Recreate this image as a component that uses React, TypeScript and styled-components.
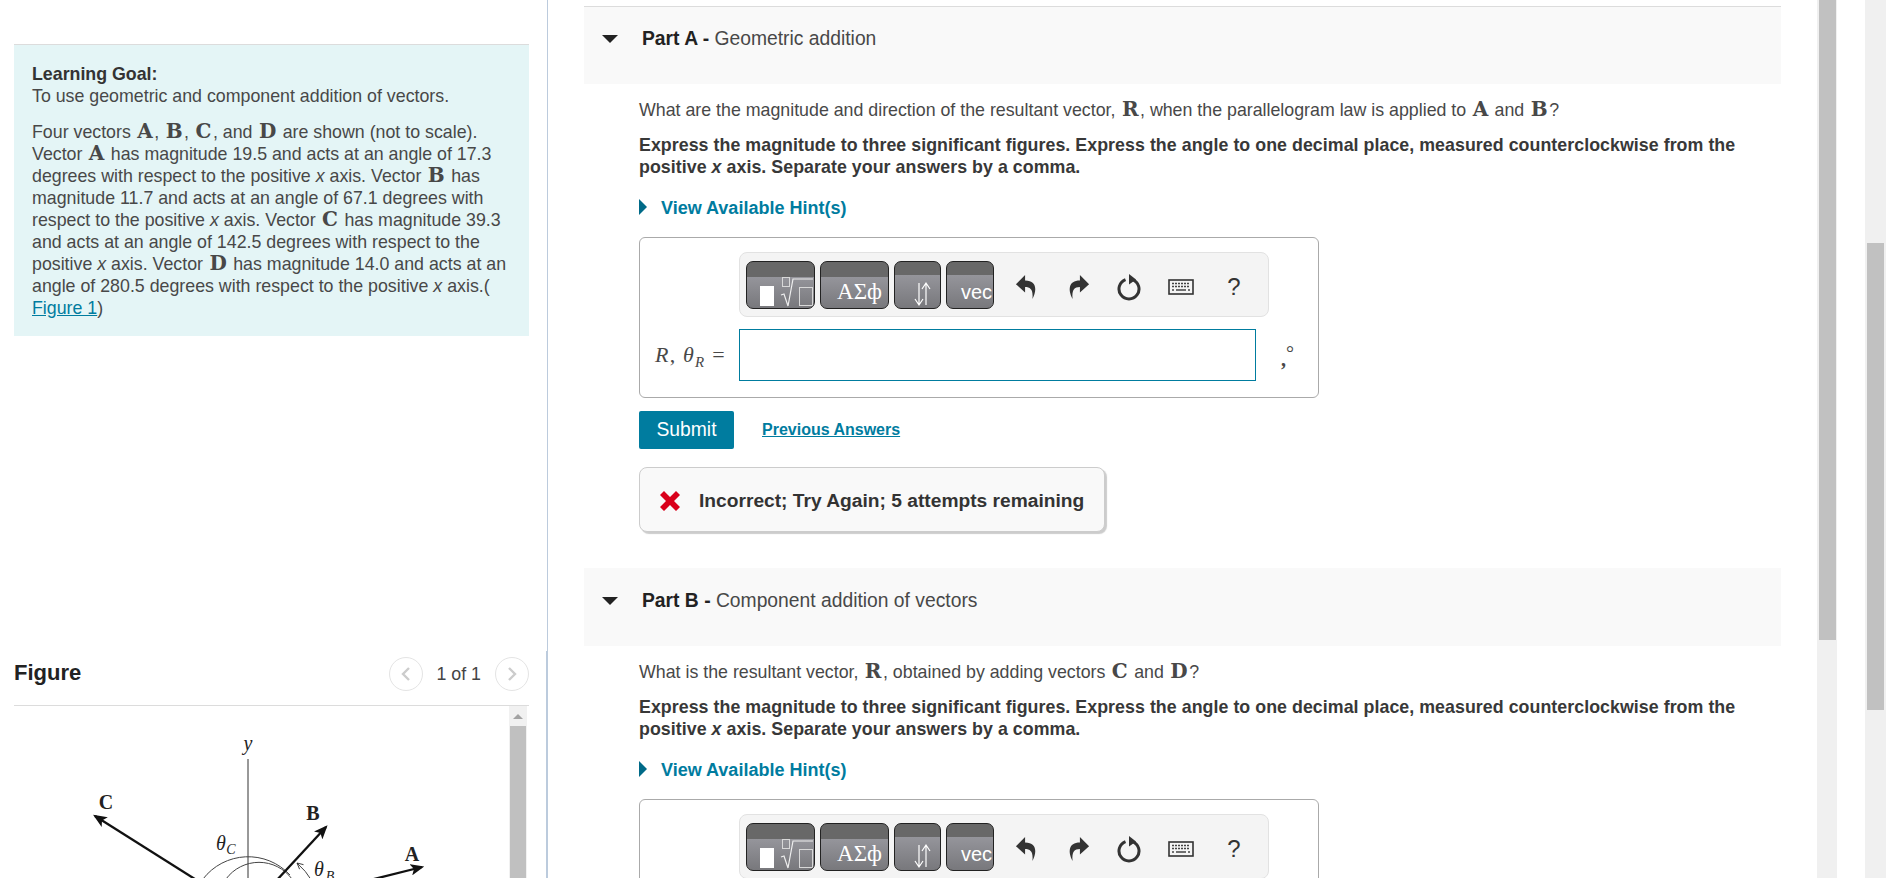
import styled, { createGlobalStyle } from 'styled-components';

const GlobalStyle = createGlobalStyle`
  html, body {
    margin: 0;
    padding: 0;
    background: #fff;
    overflow: hidden;
  }
  body {
    font-family: "Liberation Sans", Arial, sans-serif;
    font-size: 17.8px;
    line-height: 22px;
    color: #484848;
  }
`;

const V = styled.b`
  font-family: "DejaVu Serif", "Liberation Serif", serif;
  font-size: 20px;
  line-height: 0;
  font-weight: 700;
  color: #484848;
  margin: 0 1.5px;
`;

const Toolbar = () => (
  <ToolRow>
    <MathButton $width={69}>
      <svg width="67" height="46" viewBox="0 0 67 46">
        <rect x="13" y="24" width="14" height="20" fill="#fff" />
        <rect x="35.5" y="15.5" width="7" height="9" fill="none" stroke="#d8d8d8" />
        <path d="M34 33l3-1 4 12 5-27h20" fill="none" stroke="#eee" strokeWidth="1.2" />
        <rect x="52.5" y="25.5" width="13" height="18" fill="none" stroke="#d8d8d8" />
      </svg>
    </MathButton>
    <MathButton $width={69}>
      <ButtonText $serif>ΑΣф</ButtonText>
    </MathButton>
    <MathButton $width={47} $band={13}>
      <svg width="45" height="46" viewBox="0 0 45 46">
        <path d="M24 21v22M20 37l4 6 4-6M31 43V21M27 27l4-6 4 6" fill="none" stroke="#fff" strokeWidth="1.2" />
      </svg>
    </MathButton>
    <MathButton $width={48} $band={13}>
      <ButtonText>vec</ButtonText>
    </MathButton>
    <ActionIcons>
      <ActionIcon>
        <svg width="22" height="26" viewBox="0 0 24 28">
          <path d="M11 1L1 11l10 9v-6c6 0 9 3 8 13 5-9 5-20-8-20z" fill="#333" />
        </svg>
      </ActionIcon>
      <ActionIcon>
        <svg width="22" height="26" viewBox="0 0 24 28">
          <path d="M13 1l10 10-10 9v-6c-6 0-9 3-8 13C0 18 0 7 13 7z" fill="#333" />
        </svg>
      </ActionIcon>
      <ActionIcon>
        <svg width="24" height="28" viewBox="0 0 24 28">
          <path d="M15.5 6.6a10 10 0 1 1-7 0" fill="none" stroke="#333" strokeWidth="3" />
          <path d="M12 1l7 5.5-7 5z" fill="#333" />
        </svg>
      </ActionIcon>
      <ActionIcon>
        <svg width="26" height="16" viewBox="0 0 26 16">
          <rect x="1" y="1" width="24" height="14" fill="#f4f4f4" stroke="#333" strokeWidth="1.6" />
          <path d="M4 4.5h18M4 7.5h18" stroke="#444" strokeWidth="1.6" strokeDasharray="2 1" />
          <path d="M4 11h2M8 11h10M20 11h2" stroke="#444" strokeWidth="1.6" />
        </svg>
      </ActionIcon>
      <HelpMark>?</HelpMark>
    </ActionIcons>
  </ToolRow>
);

const App = () => {
  return (
    <Page>
      <GlobalStyle />
      <LeftPane>
        <GoalSection>
          <GoalBox>
            <strong>Learning Goal:</strong>
            <br />
            To use geometric and component addition of vectors.
            <GoalParagraph>
              Four vectors <V>A</V>, <V>B</V>, <V>C</V>, and <V>D</V> are shown (not to scale).
              Vector <V>A</V> has magnitude 19.5 and acts at an angle of 17.3 degrees with respect
              to the positive <i>x</i> axis. Vector <V>B</V> has magnitude 11.7 and acts at an angle
              of 67.1 degrees with respect to the positive <i>x</i> axis. Vector <V>C</V> has
              magnitude 39.3 and acts at an angle of 142.5 degrees with respect to the
              positive <i>x</i> axis. Vector <V>D</V> has magnitude 14.0 and acts at an angle of
              280.5 degrees with respect to the positive <i>x</i> axis.(
              <br />
              <FigureLink>Figure 1</FigureLink>)
            </GoalParagraph>
          </GoalBox>
        </GoalSection>
        <FigureSection>
          <FigureHeader>
            <FigureTitle>Figure</FigureTitle>
            <Pager>
              <PagerButton>
                <svg width="10" height="16" viewBox="0 0 10 16">
                  <path d="M8 2L2 8l6 6" fill="none" stroke="#ccc" strokeWidth="2.4" />
                </svg>
              </PagerButton>
              <PagerText>1 of 1</PagerText>
              <PagerButton>
                <svg width="10" height="16" viewBox="0 0 10 16">
                  <path d="M2 2l6 6-6 6" fill="none" stroke="#ccc" strokeWidth="2.4" />
                </svg>
              </PagerButton>
            </Pager>
          </FigureHeader>
          <FigureBody>
            <svg width="495" height="173" viewBox="14 705 495 173">
              <defs>
                <marker id="head" markerWidth="6" markerHeight="5" refX="5" refY="2.5" orient="auto">
                  <path d="M0 0L6 2.5 0 5 1.4 2.5z" fill="#111" />
                </marker>
                <marker id="thin" markerWidth="8" markerHeight="8" refX="7" refY="4" orient="auto">
                  <path d="M1 1L7 4 1 7" fill="none" stroke="#222" strokeWidth="0.8" />
                </marker>
              </defs>
              <line x1="248" y1="758" x2="248" y2="880" stroke="#333" strokeWidth="1" />
              <path d="M203 878A57 57 0 0 1 290 874" fill="none" stroke="#444" strokeWidth="1" />
              <path d="M226 878A41 41 0 0 1 292 878" fill="none" stroke="#444" strokeWidth="1" />
              <path d="M312 880A72 72 0 0 0 297 862" fill="none" stroke="#444" strokeWidth="1" markerEnd="url(#thin)" />
              <line x1="198" y1="880" x2="95" y2="815" stroke="#111" strokeWidth="2.3" markerEnd="url(#head)" />
              <line x1="276" y1="880" x2="326" y2="826" stroke="#111" strokeWidth="2.3" markerEnd="url(#head)" />
              <line x1="366" y1="880" x2="422" y2="866" stroke="#111" strokeWidth="2.3" markerEnd="url(#head)" />
              <FigureLabel x="248" y="749" $italic>y</FigureLabel>
              <FigureLabel x="106" y="808" $bold>C</FigureLabel>
              <FigureLabel x="313" y="819" $bold>B</FigureLabel>
              <FigureLabel x="412" y="860" $bold>A</FigureLabel>
              <FigureLabel x="221" y="849" $italic>θ</FigureLabel>
              <FigureSub x="231" y="853">C</FigureSub>
              <FigureLabel x="319" y="875" $italic>θ</FigureLabel>
              <FigureSub x="330" y="880">B</FigureSub>
            </svg>
            <FigureScroll>
              <ScrollUp />
              <FigureThumb />
            </FigureScroll>
          </FigureBody>
        </FigureSection>
      </LeftPane>

      <MainPane>
        <PartHeader $ruled>
          <Caret />
          <PartTitle>
            <strong>Part A - </strong>Geometric addition
          </PartTitle>
        </PartHeader>
        <PartBody>
          <Question>
            What are the magnitude and direction of the resultant vector, <V>R</V>, when the
            parallelogram law is applied to <V>A</V> and <V>B</V>?
          </Question>
          <Instructions>
            Express the magnitude to three significant figures. Express the angle to one decimal
            place, measured counterclockwise from the positive <i>x</i> axis. Separate your answers
            by a comma.
          </Instructions>
          <HintLink>
            <HintCaret />
            View Available Hint(s)
          </HintLink>
          <AnswerBox>
            <Toolbar />
            <AnswerRow>
              <AnswerLabel>
                <i>R</i>, <i>θ</i>
                <sub>
                  <i>R</i>
                </sub>{' '}
                =
              </AnswerLabel>
              <AnswerInput />
              <AnswerUnit>
                ,<Degree>°</Degree>
              </AnswerUnit>
            </AnswerRow>
          </AnswerBox>
          <ActionRow>
            <SubmitButton>Submit</SubmitButton>
            <PreviousLink>Previous Answers</PreviousLink>
          </ActionRow>
          <Feedback>
            <svg width="20" height="20" viewBox="0 0 20 20">
              <path d="M0 4l4-4 6 6 6-6 4 4-6 6 6 6-4 4-6-6-6 6-4-4 6-6z" fill="#d9001b" />
            </svg>
            Incorrect; Try Again; 5 attempts remaining
          </Feedback>
        </PartBody>
        <PartHeader>
          <Caret />
          <PartTitle>
            <strong>Part B - </strong>Component addition of vectors
          </PartTitle>
        </PartHeader>
        <PartBody>
          <Question $second>
            What is the resultant vector, <V>R</V>, obtained by adding vectors <V>C</V> and <V>D</V>?
          </Question>
          <Instructions>
            Express the magnitude to three significant figures. Express the angle to one decimal
            place, measured counterclockwise from the positive <i>x</i> axis. Separate your answers
            by a comma.
          </Instructions>
          <HintLink>
            <HintCaret />
            View Available Hint(s)
          </HintLink>
          <AnswerBox>
            <Toolbar />
          </AnswerBox>
        </PartBody>
      </MainPane>

      <ScrollTrack>
        <ScrollThumb $top={0} $height={640} />
      </ScrollTrack>
      <Gutter />
      <ScrollTrack>
        <ScrollThumb $top={243} $height={467} />
      </ScrollTrack>
    </Page>
  );
};
export default App;

const Page = styled.div`
  width: 1886px;
  height: 878px;
  display: grid;
  grid-template-columns: 548px 1269px 20px 28px 21px;
  overflow: hidden;
`;

const LeftPane = styled.div`
  display: flex;
  flex-direction: column;
  height: 878px;
`;

const GoalSection = styled.div`
  height: 651px;
  box-sizing: border-box;
  padding: 44px 18px 0 14px;
  border-right: 1px solid #bccbdd;
`;

const GoalBox = styled.div`
  box-sizing: border-box;
  height: 292px;
  padding: 18px 18px 0;
  background: #e4f5f6;
  border-top: 1px solid #dcdcdc;

  strong {
    color: #333;
  }
`;

const GoalParagraph = styled.p`
  margin: 14px 0 0;
`;

const FigureLink = styled.a`
  color: #007c9f;
  text-decoration: underline;
`;

const FigureSection = styled.div`
  flex: 1;
  min-height: 0;
  padding-left: 14px;
  padding-right: 17px;
  border-right: 2px solid #bccbdd;
  display: flex;
  flex-direction: column;
`;

const FigureHeader = styled.div`
  box-sizing: border-box;
  height: 55px;
  padding-bottom: 9px;
  display: flex;
  align-items: center;
  justify-content: space-between;
  border-bottom: 1px solid #dcdcdc;
`;

const FigureTitle = styled.div`
  font-size: 22px;
  font-weight: 700;
  color: #222;
  margin-top: -2px;
`;

const Pager = styled.div`
  display: flex;
  align-items: center;
  gap: 14px;
`;

const PagerButton = styled.div`
  box-sizing: border-box;
  width: 34px;
  height: 34px;
  border: 1px solid #e4e4e4;
  border-radius: 50%;
  display: flex;
  align-items: center;
  justify-content: center;
`;

const PagerText = styled.span`
  font-size: 17.8px;
  color: #444;
`;

const FigureBody = styled.div`
  flex: 1;
  display: flex;
  min-height: 0;
`;

const FigureLabel = styled.text<{ $bold?: boolean; $italic?: boolean }>`
  font-family: "Liberation Serif", serif;
  font-size: 20px;
  font-weight: ${(p) => (p.$bold ? 700 : 400)};
  font-style: ${(p) => (p.$italic ? 'italic' : 'normal')};
  text-anchor: middle;
  fill: #222;
`;

const FigureSub = styled.text`
  font-family: "Liberation Serif", serif;
  font-size: 14px;
  font-style: italic;
  text-anchor: middle;
  fill: #222;
`;

const FigureScroll = styled.div`
  width: 18px;
  display: flex;
  flex-direction: column;
  background: #f1f1f1;
`;

const ScrollUp = styled.div`
  width: 0;
  height: 0;
  margin: 8px auto 7px;
  border-left: 5px solid transparent;
  border-right: 5px solid transparent;
  border-bottom: 5px solid #a3a3a3;
`;

const FigureThumb = styled.div`
  flex: 1;
  background: #c0c0c0;
  margin: 0 1px;
`;

const MainPane = styled.div`
  box-sizing: border-box;
  height: 878px;
  overflow: hidden;
  padding: 6px 36px 0;
`;

const PartHeader = styled.div<{ $ruled?: boolean }>`
  box-sizing: border-box;
  height: 78px;
  background: #f9f9f9;
  border-top: ${(p) => (p.$ruled ? '1px solid #dcdcdc' : '0')};
  display: flex;
  align-items: flex-start;
  padding: ${(p) => (p.$ruled ? '21px' : '22px')} 0 0 18px;
`;

const Caret = styled.div`
  width: 0;
  height: 0;
  margin-top: 7px;
  border-left: 8px solid transparent;
  border-right: 8px solid transparent;
  border-top: 8px solid #222;
`;

const PartTitle = styled.div`
  margin-left: 24px;
  font-size: 19.3px;
  color: #484848;

  strong {
    color: #222;
  }
`;

const PartBody = styled.div`
  padding-left: 55px;
`;

const Question = styled.p<{ $second?: boolean }>`
  margin: 15px 0 ${(p) => (p.$second ? '1px' : '0')};
`;

const Instructions = styled.p`
  margin: 13px 0 0;
  font-weight: 700;
  color: #383838;
  letter-spacing: 0.05px;
`;

const HintLink = styled.div`
  margin-top: 19px;
  display: flex;
  align-items: center;
  font-weight: 700;
  font-size: 18px;
  color: #007c9f;
`;

const HintCaret = styled.span`
  width: 0;
  height: 0;
  margin-right: 14px;
  margin-top: -3px;
  border-top: 8px solid transparent;
  border-bottom: 8px solid transparent;
  border-left: 8px solid #006a88;
`;

const AnswerBox = styled.div`
  box-sizing: border-box;
  width: 680px;
  height: 161px;
  margin-top: 18px;
  padding: 14px 0 0 99px;
  border: 1px solid #aaa;
  border-radius: 6px;
`;

const ToolRow = styled.div`
  box-sizing: border-box;
  width: 530px;
  height: 65px;
  display: flex;
  align-items: center;
  gap: 5px;
  padding-left: 6px;
  background: #f4f4f4;
  border: 1px solid #e2e2e2;
  border-radius: 8px;
`;

const MathButton = styled.div<{ $width: number; $band?: number }>`
  box-sizing: border-box;
  width: ${(p) => p.$width}px;
  height: 48px;
  display: flex;
  align-items: flex-end;
  justify-content: flex-end;
  overflow: hidden;
  border: 1px solid #222;
  border-radius: 7px;
  background: linear-gradient(
    #686868 0 ${(p) => p.$band ?? 15}px,
    #95959b ${(p) => p.$band ?? 15}px,
    #78787c 100%
  );
`;

const ButtonText = styled.span<{ $serif?: boolean }>`
  color: #fff;
  font-family: ${(p) => (p.$serif ? '"Liberation Serif", serif' : '"Liberation Sans", sans-serif')};
  font-size: ${(p) => (p.$serif ? '23px' : '20px')};
  line-height: 32px;
  padding-right: ${(p) => (p.$serif ? '6px' : '1px')};
  white-space: nowrap;
`;

const ActionIcons = styled.div`
  padding: 4px 0 0 1px;
  display: grid;
  grid-template-columns: 52px 54px 46px 58px 48px;
  align-items: center;
  justify-items: center;
`;

const ActionIcon = styled.div`
  display: flex;
  align-items: center;
  justify-content: center;
`;

const HelpMark = styled.span`
  font-size: 24px;
  color: #333;
`;

const AnswerRow = styled.div`
  display: flex;
  align-items: center;
  margin-top: 12px;
  margin-left: -99px;
`;

const AnswerLabel = styled.div`
  width: 87px;
  box-sizing: border-box;
  padding-left: 15px;
  font-family: "Liberation Serif", serif;
  font-size: 22px;
  letter-spacing: 1.2px;
  white-space: nowrap;

  sub {
    font-size: 15px;
    line-height: 0;
  }
`;

const AnswerInput = styled.div`
  box-sizing: border-box;
  width: 517px;
  height: 52px;
  margin-left: 12px;
  background: #fff;
  border: 1px solid #007c9f;
`;

const AnswerUnit = styled.div`
  margin-left: 25px;
  font-family: "Liberation Serif", serif;
  font-size: 20px;
  font-weight: 700;
  padding-top: 2px;
`;

const Degree = styled.span`
  vertical-align: 6px;
  font-weight: 400;
`;

const ActionRow = styled.div`
  display: flex;
  align-items: center;
  margin-top: 13px;
`;

const SubmitButton = styled.div`
  box-sizing: border-box;
  width: 95px;
  height: 38px;
  display: flex;
  align-items: center;
  justify-content: center;
  font-size: 19.3px;
  background: #007c9f;
  color: #fff;
  border-radius: 2px;
`;

const PreviousLink = styled.a`
  margin-left: 28px;
  font-size: 16px;
  font-weight: 700;
  color: #007c9f;
  text-decoration: underline;
`;

const Feedback = styled.div`
  box-sizing: border-box;
  width: 466px;
  height: 65px;
  margin-top: 18px;
  margin-bottom: 36px;
  display: flex;
  align-items: center;
  gap: 19px;
  padding: 2px 0 0 20px;
  font-size: 19.2px;
  font-weight: 700;
  color: #333;
  white-space: nowrap;
  background: #f9f9f9;
  border: 1px solid #ccc;
  border-radius: 8px;
  box-shadow: 2px 2px 1px #ccc;
`;

const ScrollTrack = styled.div`
  height: 878px;
  background: #f0f0f0;
  display: flex;
  flex-direction: column;
  align-items: center;
`;

const ScrollThumb = styled.div<{ $top: number; $height: number }>`
  width: 17px;
  margin-top: ${(p) => p.$top}px;
  height: ${(p) => p.$height}px;
  background: #c1c1c1;
`;

const Gutter = styled.div`
  background: #fff;
`;
